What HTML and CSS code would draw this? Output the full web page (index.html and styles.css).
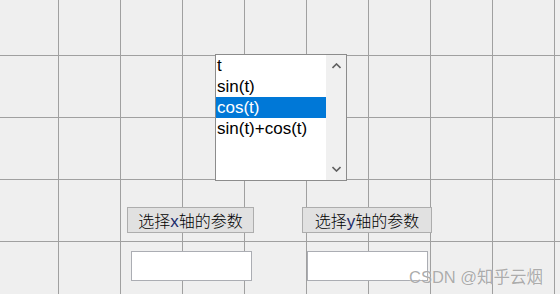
FILE: index.html
```html
<!DOCTYPE html>
<html>
<head>
<meta charset="utf-8">
<link rel="stylesheet" href="styles.css">
</head>
<body>
<div class="canvas">
  <div class="listbox">
    <ul class="items">
      <li class="item">t</li>
      <li class="item">sin(t)</li>
      <li class="item selected">cos(t)</li>
      <li class="item">sin(t)+cos(t)</li>
    </ul>
    <div class="scrollbar">
      <svg class="arrow" width="9" height="6" viewBox="0 0 9 6"><path d="M0.5 5 L4.5 1 L8.5 5" fill="none" stroke="#606060" stroke-width="1.6"/></svg>
      <svg class="arrow" width="9" height="6" viewBox="0 0 9 6"><path d="M0.5 1 L4.5 5 L8.5 1" fill="none" stroke="#606060" stroke-width="1.6"/></svg>
    </div>
  </div>
  <div class="buttons">
    <button class="btn btn-x">选择<span class="latin">x</span>轴的参数</button>
    <button class="btn btn-y">选择<span class="latin">y</span>轴的参数</button>
  </div>
  <div class="edits">
    <div class="edit"></div>
    <div class="edit edit-y"></div>
  </div>
  <div class="watermark">CSDN @知乎云烟</div>
</div>
</body>
</html>
```
FILE: styles.css
```css
html, body {
  margin: 0;
  padding: 0;
}
body {
  width: 560px;
  height: 294px;
  overflow: hidden;
  background-color: #efefef;
  background-image:
    linear-gradient(to right, #a0a0a0 1px, transparent 1px),
    linear-gradient(to bottom, #a0a0a0 1px, transparent 1px);
  background-size: 62px 100%, 100% 62px;
  background-position: 58px 0, 0 55px;
  font-family: "Liberation Sans", Arial, sans-serif;
}
.canvas {
  position: relative;
  width: 560px;
  height: 294px;
  padding-top: 54px;
  box-sizing: border-box;
}
.listbox {
  margin-left: 215px;
  width: 132px;
  height: 127px;
  box-sizing: border-box;
  border: 1px solid #8c8c8c;
  background: #fff;
  display: flex;
}
.items {
  list-style: none;
  margin: 0;
  padding: 0;
  flex: 1;
  font-size: 17px;
  color: #000;
}
.item {
  height: 21px;
  line-height: 21px;
  padding-left: 1px;
  white-space: nowrap;
}
.selected {
  background: #0078d7;
  color: #fff;
}
.scrollbar {
  width: 20px;
  background: #f0f0f0;
  display: flex;
  flex-direction: column;
  justify-content: space-between;
  align-items: center;
  padding: 8px 0 8px;
}
.arrow {
  display: block;
}
.buttons {
  display: flex;
  margin-top: 26px;
  margin-left: 127px;
  gap: 48px;
}
.btn {
  width: 127px;
  height: 26px;
  box-sizing: border-box;
  border: 1px solid #adadad;
  background: #e1e1e1;
  padding: 0;
  font-family: "Noto Sans CJK SC", sans-serif;
  font-size: 16px;
  font-weight: 300;
  color: #000;
  line-height: 24px;
}
.btn-y {
  width: 130px;
}
.latin {
  font-family: "Liberation Sans", Arial, sans-serif;
  font-size: 17px;
  color: #1b2b6b;
}
.edits {
  display: flex;
  margin-top: 18px;
  margin-left: 131px;
  gap: 55px;
}
.edit {
  width: 121px;
  height: 30px;
  box-sizing: border-box;
  border: 1px solid #abadb3;
  background: #fff;
}
.watermark {
  position: absolute;
  left: 409px;
  top: 264px;
  font-family: "Liberation Sans", "Noto Sans CJK SC", sans-serif;
  font-size: 16.5px;
  color: rgba(150, 150, 150, 0.8);
  text-shadow: 0 0 1px rgba(255,255,255,0.9);
  white-space: nowrap;
}
```
